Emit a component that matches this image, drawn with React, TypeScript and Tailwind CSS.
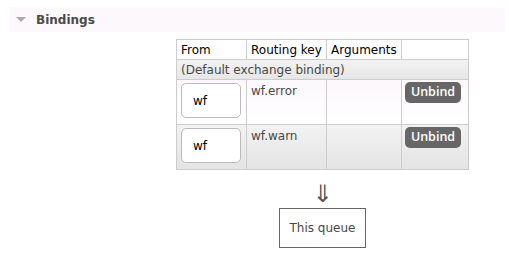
export default function App() {
  const rows = [
    { from: 'wf', key: 'wf.error', bg: 'bg-gradient-to-b from-[#fcf8fc] to-white' },
    { from: 'wf', key: 'wf.warn', bg: 'bg-gradient-to-b from-[#f2f2f2] to-[#e4e4e4]' },
  ];

  return (
    <div className="w-[509px] h-[259px] bg-white text-[12px] text-[#484848] font-['DejaVu_Sans',Verdana,sans-serif] overflow-hidden">
      {/* section header */}
      <div className="mt-[7px] ml-[10px] mr-[4px] h-[25px] bg-[#fcf8fc] flex items-center">
        <span className="ml-[6px] w-0 h-0 border-l-[5px] border-r-[5px] border-t-[5px] border-l-transparent border-r-transparent border-t-[#aaa]" />
        <span className="ml-[10px] text-[12px] font-bold text-[#4a4a4a]">Bindings</span>
      </div>

      <div className="ml-[176px] mt-[7px] w-[293px] flex flex-col items-center">
        <table className="w-[293px] border-collapse table-fixed">
          <colgroup>
            <col className="w-[70px]" />
            <col className="w-[80px]" />
            <col className="w-[75px]" />
            <col className="w-[67px]" />
          </colgroup>
          <thead>
            <tr className="h-[20px] bg-white">
              <th className="border border-[#ccc] px-[4px] text-left font-normal text-black">From</th>
              <th className="border border-[#ccc] px-[4px] text-left font-normal text-black">Routing key</th>
              <th className="border border-[#ccc] px-[4px] text-left font-normal text-black">Arguments</th>
              <th className="border border-[#ccc]" />
            </tr>
          </thead>
          <tbody>
            <tr className="h-[20px] bg-gradient-to-b from-[#f2f2f2] to-[#e6e6e6]">
              <td colSpan={4} className="border border-[#ccc] px-[4px]">(Default exchange binding)</td>
            </tr>
            {rows.map((r) => (
              <tr key={r.key} className={`h-[45px] ${r.bg}`}>
                <td className="border border-[#ccc] align-top pt-[3px] pl-[4px]">
                  <div className="w-[60px] h-[35px] border border-[#bbb] rounded-[5px] bg-white flex items-center pl-[11px] text-black">
                    {r.from}
                  </div>
                </td>
                <td className="border border-[#ccc] align-top pl-[4px] pt-[2px]">{r.key}</td>
                <td className="border border-[#ccc]" />
                <td className="border border-[#ccc] align-top pt-[2px] pl-[3px]">
                  <span className="inline-flex items-center justify-center w-[56px] h-[21px] rounded-[5px] bg-[#666] text-white text-[12.5px] font-semibold font-['Open_Sans',sans-serif]">
                    Unbind
                  </span>
                </td>
              </tr>
            ))}
          </tbody>
        </table>

        <div className="mt-[12px] text-[24px] leading-[24px] text-[#555]">⇓</div>
        <div className="mt-[2px] w-[87px] h-[40px] border border-[#666] flex items-center justify-center text-[#484848]">
          This queue
        </div>
      </div>
    </div>
  );
}
